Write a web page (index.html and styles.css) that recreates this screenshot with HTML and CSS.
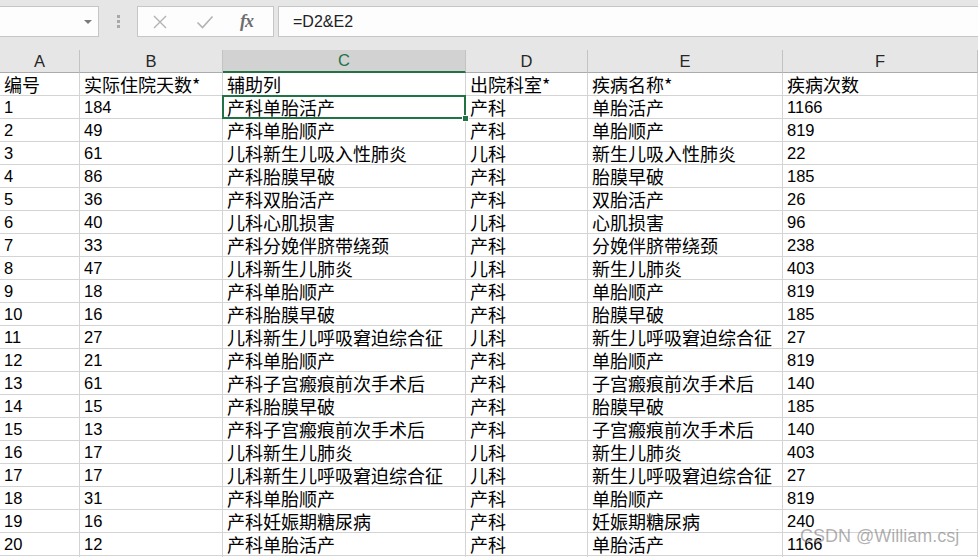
FILE: index.html
```html
<!DOCTYPE html>
<html lang="zh">
<head>
<meta charset="utf-8">
<title>Sheet</title>
<link rel="stylesheet" href="styles.css">
</head>
<body>
<div class="app">
  <div class="bar">
    <div class="namebox"><span class="drop"></span></div>
    <div class="grip"><i></i><i></i><i></i></div>
    <div class="fnbox">
      <svg class="ico" width="16" height="16" viewBox="0 0 16 16"><path d="M2 2 L14 14 M14 2 L2 14" stroke="#b3b3b3" stroke-width="1.4" fill="none"/></svg>
      <svg class="ico" width="18" height="16" viewBox="0 0 18 16"><path d="M1.5 8.5 L6.5 13.5 L16.5 2.5" stroke="#b3b3b3" stroke-width="1.6" fill="none"/></svg>
      <span class="fx">fx</span>
    </div>
    <div class="formula">=D2&amp;E2</div>
  </div>
  <div class="sheet">
    <div class="ch">A</div><div class="ch">B</div><div class="ch cur">C</div><div class="ch">D</div><div class="ch">E</div><div class="ch">F</div>

    <div class="c">编号</div><div class="c">实际住院天数*</div><div class="c">辅助列</div><div class="c">出院科室*</div><div class="c">疾病名称*</div><div class="c">疾病次数</div>

    <div class="c n">1</div><div class="c n">184</div><div class="c sel">产科单胎活产</div><div class="c">产科</div><div class="c">单胎活产</div><div class="c n">1166</div>
    <div class="c n">2</div><div class="c n">49</div><div class="c">产科单胎顺产</div><div class="c">产科</div><div class="c">单胎顺产</div><div class="c n">819</div>
    <div class="c n">3</div><div class="c n">61</div><div class="c">儿科新生儿吸入性肺炎</div><div class="c">儿科</div><div class="c">新生儿吸入性肺炎</div><div class="c n">22</div>
    <div class="c n">4</div><div class="c n">86</div><div class="c">产科胎膜早破</div><div class="c">产科</div><div class="c">胎膜早破</div><div class="c n">185</div>
    <div class="c n">5</div><div class="c n">36</div><div class="c">产科双胎活产</div><div class="c">产科</div><div class="c">双胎活产</div><div class="c n">26</div>
    <div class="c n">6</div><div class="c n">40</div><div class="c">儿科心肌损害</div><div class="c">儿科</div><div class="c">心肌损害</div><div class="c n">96</div>
    <div class="c n">7</div><div class="c n">33</div><div class="c">产科分娩伴脐带绕颈</div><div class="c">产科</div><div class="c">分娩伴脐带绕颈</div><div class="c n">238</div>
    <div class="c n">8</div><div class="c n">47</div><div class="c">儿科新生儿肺炎</div><div class="c">儿科</div><div class="c">新生儿肺炎</div><div class="c n">403</div>
    <div class="c n">9</div><div class="c n">18</div><div class="c">产科单胎顺产</div><div class="c">产科</div><div class="c">单胎顺产</div><div class="c n">819</div>
    <div class="c n">10</div><div class="c n">16</div><div class="c">产科胎膜早破</div><div class="c">产科</div><div class="c">胎膜早破</div><div class="c n">185</div>
    <div class="c n">11</div><div class="c n">27</div><div class="c">儿科新生儿呼吸窘迫综合征</div><div class="c">儿科</div><div class="c">新生儿呼吸窘迫综合征</div><div class="c n">27</div>
    <div class="c n">12</div><div class="c n">21</div><div class="c">产科单胎顺产</div><div class="c">产科</div><div class="c">单胎顺产</div><div class="c n">819</div>
    <div class="c n">13</div><div class="c n">61</div><div class="c">产科子宫瘢痕前次手术后</div><div class="c">产科</div><div class="c">子宫瘢痕前次手术后</div><div class="c n">140</div>
    <div class="c n">14</div><div class="c n">15</div><div class="c">产科胎膜早破</div><div class="c">产科</div><div class="c">胎膜早破</div><div class="c n">185</div>
    <div class="c n">15</div><div class="c n">13</div><div class="c">产科子宫瘢痕前次手术后</div><div class="c">产科</div><div class="c">子宫瘢痕前次手术后</div><div class="c n">140</div>
    <div class="c n">16</div><div class="c n">17</div><div class="c">儿科新生儿肺炎</div><div class="c">儿科</div><div class="c">新生儿肺炎</div><div class="c n">403</div>
    <div class="c n">17</div><div class="c n">17</div><div class="c">儿科新生儿呼吸窘迫综合征</div><div class="c">儿科</div><div class="c">新生儿呼吸窘迫综合征</div><div class="c n">27</div>
    <div class="c n">18</div><div class="c n">31</div><div class="c">产科单胎顺产</div><div class="c">产科</div><div class="c">单胎顺产</div><div class="c n">819</div>
    <div class="c n">19</div><div class="c n">16</div><div class="c">产科妊娠期糖尿病</div><div class="c">产科</div><div class="c">妊娠期糖尿病</div><div class="c n">240</div>
    <div class="c n">20</div><div class="c n">12</div><div class="c">产科单胎活产</div><div class="c">产科</div><div class="c">单胎活产</div><div class="c n">1166</div>
    <div class="c"></div><div class="c"></div><div class="c"></div><div class="c"></div><div class="c"></div><div class="c"></div>
  </div>
  <div class="mark">CSDN @William.csj</div>
</div>
</body>
</html>
```
FILE: styles.css
```css
html, body {
  margin: 0;
  padding: 0;
  background: #ffffff;
}
.app {
  position: relative;
  width: 978px;
  height: 557px;
  overflow: hidden;
  font-family: "Noto Sans CJK SC", "Liberation Sans", sans-serif;
}
.bar {
  display: flex;
  align-items: flex-start;
  height: 50px;
  box-sizing: border-box;
  padding-top: 6px;
  background: #e6e6e6;
}
.namebox {
  width: 99px;
  height: 31px;
  box-sizing: border-box;
  border: 1px solid #c6c6c6;
  border-left: none;
  background: #fdfdfd;
  display: flex;
  align-items: center;
  justify-content: flex-end;
  padding-right: 6px;
}
.drop {
  width: 0;
  height: 0;
  border-left: 4px solid transparent;
  border-right: 4px solid transparent;
  border-top: 4px solid #7a7a7a;
  margin-top: 1px;
}
.grip {
  width: 38px;
  height: 31px;
  display: flex;
  flex-direction: column;
  align-items: center;
  justify-content: center;
  gap: 2px;
}
.grip i {
  display: block;
  width: 3px;
  height: 3px;
  background: #a8a8a8;
}
.fnbox {
  width: 137px;
  height: 31px;
  box-sizing: border-box;
  border: 1px solid #c6c6c6;
  background: #fdfdfd;
  display: flex;
  align-items: center;
  padding-left: 14px;
  gap: 0;
}
.ico { display: block; }
.fnbox .ico:first-child { margin-right: 28px; }
.fnbox .ico:nth-child(2) { margin-right: 26px; }
.fx {
  font-family: "Liberation Serif", serif;
  font-style: italic;
  font-weight: bold;
  font-size: 18px;
  color: #6e6e6e;
  letter-spacing: -1px;
  line-height: 1;
  margin-top: -2px;
}
.formula {
  flex: 1;
  margin-left: 4px;
  height: 31px;
  box-sizing: border-box;
  border: 1px solid #c6c6c6;
  border-right: none;
  background: #fdfdfd;
  padding-left: 14px;
  font-family: "Liberation Sans", sans-serif;
  font-size: 16px;
  line-height: 29px;
  color: #222222;
}
.sheet {
  display: grid;
  grid-template-columns: 80px 143px 243px 122px 195px 195px;
  grid-auto-rows: 23px;
}
.ch {
  box-sizing: border-box;
  background: #e6e6e6;
  border-right: 1px solid #c3c3c3;
  border-bottom: 1px solid #ababab;
  text-align: center;
  font-family: "Liberation Sans", sans-serif;
  font-size: 16.5px;
  line-height: 22px;
  color: #262626;
}
.ch.cur {
  background: #d2d2d2;
  color: #217346;
  border-bottom: 2px solid #217346;
  line-height: 21px;
}
.c {
  box-sizing: border-box;
  border-right: 1px solid #d4d4d4;
  border-bottom: 1px solid #d4d4d4;
  padding-left: 4px;
  font-size: 18px;
  line-height: 22px;
  color: #000000;
  white-space: nowrap;
  overflow: visible;
}
.c.n {
  font-family: "Liberation Sans", sans-serif;
  font-size: 16.5px;
}
.sel {
  position: relative;
}
.sel::after {
  content: "";
  position: absolute;
  left: -1px;
  top: -1px;
  right: -1px;
  bottom: -1px;
  border: 2px solid #217346;
  pointer-events: none;
}
.sel::before {
  content: "";
  position: absolute;
  right: -4px;
  bottom: -4px;
  width: 5px;
  height: 5px;
  background: #217346;
  border: 1px solid #ffffff;
  z-index: 2;
}
.mark {
  position: absolute;
  left: 800px;
  top: 526px;
  font-family: "Liberation Sans", sans-serif;
  font-size: 18px;
  color: rgba(110, 110, 110, 0.55);
  white-space: nowrap;
}
```
